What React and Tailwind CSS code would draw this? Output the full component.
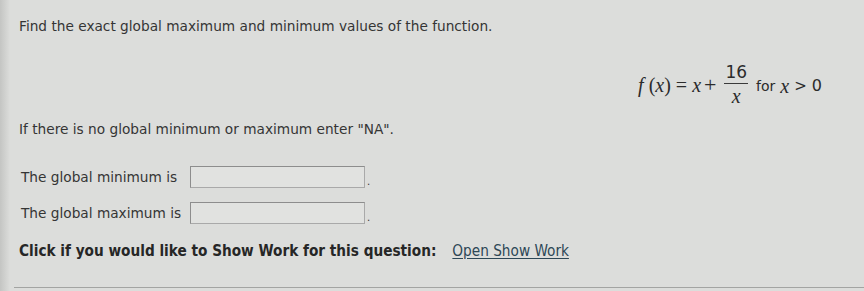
import React from 'react';

const sans = { fontFamily: '"DejaVu Sans", Verdana, sans-serif' };
const serif = { fontFamily: '"Liberation Serif", "Times New Roman", serif' };
const condensed = { fontFamily: '"DejaVu Sans Condensed", "DejaVu Sans", sans-serif' };

function Formula() {
  return (
    <div className="flex items-center text-[#2b2b2b]">
      <span className="text-[20px] italic" style={serif}>f</span>
      <span className="ml-[5px] text-[20px]" style={serif}>(<i>x</i>)</span>
      <span className="mx-[5px] text-[20px]" style={serif}>=</span>
      <span className="text-[20px] italic" style={serif}>x</span>
      <span className="mx-[3px] text-[22px]" style={serif}>+</span>
      <div className="mx-[4px] flex flex-col items-center">
        <span className="px-[2px] text-[17px] leading-[22px]" style={sans}>16</span>
        <span className="h-px w-[24px] bg-[#3a3a3a]" />
        <span className="text-[20px] italic leading-[24px]" style={serif}>x</span>
      </div>
      <span className="ml-[3px] mt-[3px] text-[14px]" style={sans}>for</span>
      <span className="ml-[5px] mt-[3px] text-[20px] italic" style={serif}>x</span>
      <span className="ml-[5px] mt-[3px] text-[15px]" style={sans}>&gt;</span>
      <span className="ml-[5px] mt-[3px] text-[16px]" style={sans}>0</span>
    </div>
  );
}

function AnswerRow({ label }) {
  return (
    <div className="flex items-center">
      <span className="w-[171px] pl-[2px]">{label}</span>
      <div className="h-[22px] w-[175px] border border-[#8d8d8d] border-r-[#a9a9a9] border-b-[#a9a9a9] bg-[#e1e2e0]" />
      <span className="ml-[2px] mt-[10px] text-[10px] leading-none">.</span>
    </div>
  );
}

export default function App() {
  return (
    <div
      className="relative h-[291px] w-[864px] overflow-hidden bg-[#dcdddb] text-[13.7px] text-[#353535]"
      style={sans}
    >
      <div className="absolute inset-y-0 left-0 w-[10px] bg-gradient-to-r from-[#c4c5c3] to-[#dcdddb]" />
      <div className="relative flex flex-col pl-[19px] pt-[18px]">
        <p className="leading-[17px]">Find the exact global maximum and minimum values of the function.</p>
        <div className="mr-[42px] mt-[26px] flex justify-end">
          <Formula />
        </div>
        <p className="mt-[13px] leading-[17px]">If there is no global minimum or maximum enter "NA".</p>
        <div className="mt-[28px] flex flex-col gap-[14px]">
          <AnswerRow label="The global minimum is" />
          <AnswerRow label="The global maximum is" />
        </div>
        <div className="mt-[18px] flex items-center leading-[18px]">
          <span className="text-[15.2px] font-bold text-[#262626]" style={condensed}>
            Click if you would like to Show Work for this question:
          </span>
          <a href="#" className="ml-[16px] text-[15.2px] text-[#2d4756] underline underline-offset-2" style={condensed}>
            Open Show Work
          </a>
        </div>
      </div>
      <div className="absolute bottom-[3px] left-[14px] right-0 h-px bg-[#a3a4a2]" />
    </div>
  );
}
